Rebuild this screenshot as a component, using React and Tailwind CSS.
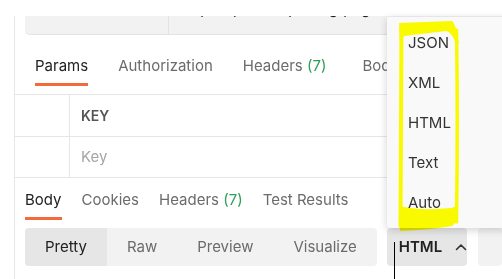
import React from "react";

const TopTab = ({ label, count, active }) => (
  <div className="flex flex-col">
    <span
      className={
        "text-[15px] leading-5 whitespace-nowrap " +
        (active ? "text-[#212121]" : "text-[#6b6b6b]")
      }
    >
      {label}
      {count && <span className="text-[#2e9f5a]"> ({count})</span>}
    </span>
    {active && <div className="mt-[7px] h-[3px] bg-[#f26b3a]" />}
  </div>
);

const Segment = ({ label, active }) => (
  <div
    className={
      "flex items-center px-[20px] text-[15px] " +
      (active ? "bg-[#e6e6e6] rounded-l-[4px] text-[#212121]" : "text-[#6b6b6b]")
    }
  >
    {label}
  </div>
);

// menu of response formats, opened above the HTML button
const FormatMenu = () => (
  <div className="absolute left-[387px] top-[17px] w-[140px] h-[211px] bg-[#f9f9f9] shadow-[0_2px_8px_rgba(0,0,0,0.18)] rounded-bl-[4px] pt-[6px]">
    {["JSON", "XML", "HTML", "Text", "Auto"].map((f) => (
      <div key={f} className="h-[40px] flex items-center pl-[21px] text-[15px] text-[#333333]">
        {f}
      </div>
    ))}
  </div>
);

// yellow marker drawn over the menu
const Highlight = () => (
  <svg
    className="absolute left-0 top-0 mix-blend-multiply pointer-events-none"
    width="502"
    height="279"
    viewBox="0 0 502 279"
  >
    <path d="M399 23 L452 21 Q456 24 459 44 L456 44 Q452 32 446 31 L404 36 L400 42 Z" fill="#ffff00" />
    <path d="M401.5 26 L400.5 226" stroke="#ffff00" strokeWidth="4" fill="none" strokeLinecap="round" />
    <path d="M456.5 30 Q458 120 456.5 222" stroke="#ffff00" strokeWidth="3.5" fill="none" strokeLinecap="round" />
    <path d="M399 206 Q420 211 452 208 L458 205 Q459 221 452 226 Q430 230 400 231 Z" fill="#ffff00" />
  </svg>
);

export default function App() {
  return (
    <div className="relative w-[502px] h-[279px] overflow-hidden bg-white font-['Inter',sans-serif]">
      <div className="pt-[16px] pl-[14px]">
        <div className="border-l border-[#e6e6e6] h-[263px]">
          {/* bottom of the previous panel */}
          <div className="ml-[10px] h-[19px] flex bg-[#f2f2f2] border-b border-[#e3e3e3] rounded-bl-[5px] overflow-hidden">
            <div className="w-[144px] shrink-0 border-r border-[#e3e3e3]" />
            <div className="pl-[13px] -mt-[17px] text-[15px] leading-5 text-[#212121] whitespace-nowrap">
              http://api.example.org/page
            </div>
          </div>

          {/* request tabs */}
          <div className="h-[60px] border-b border-[#e6e6e6] flex items-start pt-[21px] pl-[20px] gap-[30px]">
            <TopTab label="Params" active />
            <TopTab label="Authorization" />
            <TopTab label="Headers" count="7" />
            <div className="ml-[6px]">
              <TopTab label="Body" />
            </div>
          </div>

          {/* params table */}
          <div className="h-[42px] flex border-b border-[#e6e6e6]">
            <div className="w-[55px] border-r border-[#e6e6e6]" />
            <div className="pl-[11px] flex items-center text-[14px] font-semibold text-[#555555]">KEY</div>
          </div>
          <div className="h-[41px] flex border-b border-[#e6e6e6]">
            <div className="w-[55px] border-r border-[#e6e6e6]" />
            <div className="pl-[11px] flex items-center text-[15px] text-[#a6a6a6]">Key</div>
          </div>

          {/* response tabs */}
          <div className="ml-[10px] pt-[12px] flex items-start gap-[20px]">
            <TopTab label="Body" active />
            <TopTab label="Cookies" />
            <TopTab label="Headers" count="7" />
            <TopTab label="Test Results" />
          </div>

          <div className="ml-[10px] mt-[8px] flex gap-[10px]">
            <div className="w-[352px] h-[38px] flex bg-[#f2f2f2] rounded-[4px]">
              <Segment label="Pretty" active />
              <Segment label="Raw" />
              <Segment label="Preview" />
              <Segment label="Visualize" />
            </div>
            <div className="w-[97px] h-[38px] flex items-center bg-[#e6e6e6] rounded-[4px] pl-[12px] text-[15px] font-semibold text-[#212121]">
              HTML
              <svg className="ml-[13px]" width="12" height="8" viewBox="0 0 12 8" fill="none">
                <path d="M1.5 6.5 L6 2 L10.5 6.5" stroke="#333333" strokeWidth="1.6" strokeLinecap="round" strokeLinejoin="round" />
              </svg>
            </div>
            <div className="ml-px w-[40px] h-[38px] bg-[#f2f2f2] rounded-[4px]" />
          </div>
        </div>
      </div>

      <FormatMenu />
      <Highlight />
      {/* text cursor */}
      <div className="absolute left-[394px] top-[242px] w-px h-[37px] bg-black" />
    </div>
  );
}
